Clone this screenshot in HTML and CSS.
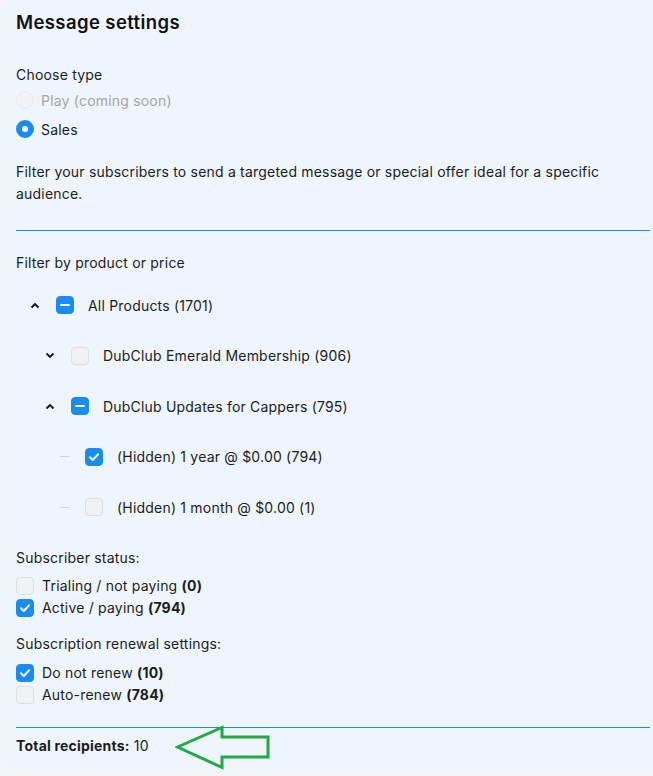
FILE: index.html
```html
<!DOCTYPE html>
<html lang="en">
<head>
<meta charset="utf-8">
<title>Message settings</title>
<link rel="stylesheet" href="styles.css">
</head>
<body>
<div class="card">
  <h2 class="title">Message settings</h2>

  <div class="label choose">Choose type</div>
  <div class="radio-row disabled"><span class="radio"></span><span>Play (coming soon)</span></div>
  <div class="radio-row"><span class="radio on"></span><span>Sales</span></div>

  <p class="desc">Filter your subscribers to send a targeted message or special offer ideal for a specific audience.</p>

  <div class="divider first"></div>

  <div class="label filter">Filter by product or price</div>

  <div class="tree">
    <div class="node lvl0">
      <span class="toggle"><svg width="10" height="7" viewBox="0 0 10 7"><polyline points="1.5,5.5 5,2 8.5,5.5" fill="none" stroke="#111" stroke-width="1.8"/></svg></span>
      <span class="cb mixed"></span>
      <span class="node-text">All Products (1701)</span>
    </div>
    <div class="node lvl1">
      <span class="toggle"><svg width="10" height="7" viewBox="0 0 10 7"><polyline points="1.5,1.5 5,5 8.5,1.5" fill="none" stroke="#111" stroke-width="1.8"/></svg></span>
      <span class="cb"></span>
      <span class="node-text">DubClub Emerald Membership (906)</span>
    </div>
    <div class="node lvl1">
      <span class="toggle"><svg width="10" height="7" viewBox="0 0 10 7"><polyline points="1.5,5.5 5,2 8.5,5.5" fill="none" stroke="#111" stroke-width="1.8"/></svg></span>
      <span class="cb mixed"></span>
      <span class="node-text">DubClub Updates for Cappers (795)</span>
    </div>
    <div class="node lvl2">
      <span class="toggle"><span class="dash"></span></span>
      <span class="cb checked"><svg width="18" height="18" viewBox="0 0 18 18"><polyline points="5,9.3 7.8,12 13,6.3" fill="none" stroke="#fff" stroke-width="2" stroke-linecap="round" stroke-linejoin="round"/></svg></span>
      <span class="node-text">(Hidden) 1 year @ $0.00 (794)</span>
    </div>
    <div class="node lvl2">
      <span class="toggle"><span class="dash"></span></span>
      <span class="cb"></span>
      <span class="node-text">(Hidden) 1 month @ $0.00 (1)</span>
    </div>
  </div>

  <div class="label status">Subscriber status:</div>
  <div class="check-row first-check"><span class="cb"></span><span>Trialing / not paying <b>(0)</b></span></div>
  <div class="check-row"><span class="cb checked"><svg width="18" height="18" viewBox="0 0 18 18"><polyline points="5,9.3 7.8,12 13,6.3" fill="none" stroke="#fff" stroke-width="2" stroke-linecap="round" stroke-linejoin="round"/></svg></span><span>Active / paying <b>(794)</b></span></div>

  <div class="label renewal">Subscription renewal settings:</div>
  <div class="check-row first-check"><span class="cb checked"><svg width="18" height="18" viewBox="0 0 18 18"><polyline points="5,9.3 7.8,12 13,6.3" fill="none" stroke="#fff" stroke-width="2" stroke-linecap="round" stroke-linejoin="round"/></svg></span><span>Do not renew <b>(10)</b></span></div>
  <div class="check-row"><span class="cb"></span><span>Auto-renew <b>(784)</b></span></div>

  <div class="divider last"></div>

  <div class="total"><b>Total recipients:</b> 10
    <svg class="arrow" width="96" height="46" viewBox="0 0 96 46"><polygon points="2.5,22 47,2.5 47,12 93,12 93,32 47,32 47,42.5" fill="none" stroke="#22a845" stroke-width="3" stroke-linejoin="miter"/></svg>
  </div>
</div>
</body>
</html>
```
FILE: styles.css
```css
html, body {
  margin: 0;
  padding: 0;
}
body {
  background: #f4f5f6;
  font-family: Inter, "Noto Sans", sans-serif;
  color: #1c1c1c;
  font-size: 14px;
  letter-spacing: 0.2px;
}
.card {
  margin: 0 0 6px 2px;
  background: #eef5fc;
  border-radius: 8px 0 0 8px;
  padding: 10px 3px 14px 14px;
}
.title {
  margin: 0;
  font-size: 18.5px;
  line-height: 24px;
  font-weight: 600;
  color: #111;
  letter-spacing: 0.4px;
}
.label {
  line-height: 20px;
}
.choose { margin-top: 31px; margin-bottom: 4px; }
.radio-row {
  display: flex;
  align-items: center;
  gap: 7px;
  height: 22px;
  margin-bottom: 7px;
}
.radio-row.disabled { color: #a5a5a5; }
.radio {
  width: 18px;
  height: 18px;
  box-sizing: border-box;
  border-radius: 50%;
  border: 1px solid #e6e9ec;
  background: #f0f2f4;
  flex: none;
}
.radio.on {
  border: 6px solid #1a8cf0;
  background: #fff;
}
.desc {
  margin: 21px 0 0;
  line-height: 22px;
}
.divider {
  height: 1px;
  background: #1a8cf0;
}
.divider.first { margin-top: 25px; }
.filter { margin-top: 22px; margin-bottom: 7px; }
.node {
  display: flex;
  align-items: center;
  height: 50.5px;
}
.lvl0 { padding-left: 10px; }
.lvl1 { padding-left: 25px; }
.lvl2 { padding-left: 39px; }
.toggle {
  width: 18px;
  height: 18px;
  display: flex;
  align-items: center;
  justify-content: center;
  margin-right: 12px;
  flex: none;
}
.dash {
  width: 9px;
  height: 1px;
  background: #d0d4d8;
}
.cb {
  width: 18px;
  height: 18px;
  box-sizing: border-box;
  border-radius: 4px;
  border: 1px solid #dcdfe3;
  background: #f1f2f3;
  flex: none;
  display: flex;
  position: relative;
}
.cb.checked, .cb.mixed {
  background: #1a8cf0;
  border-color: #1a8cf0;
}
.cb.mixed::after {
  content: "";
  position: absolute;
  left: 3px;
  right: 3px;
  top: 7px;
  height: 2px;
  background: #fff;
  border-radius: 1px;
}
.cb svg { margin: -1px; }
.node-text { margin-left: 14px; }
.status { margin-top: 15px; margin-bottom: 7px; }
.renewal { margin-top: 15px; margin-bottom: 8px; }
.check-row {
  display: flex;
  align-items: center;
  gap: 8px;
  height: 22px;
}
.check-row b { font-weight: 700; }
.divider.last { margin-top: 21px; }
.total {
  margin-top: 8px;
  line-height: 20px;
  position: relative;
}
.total b { font-weight: 700; }
.arrow {
  position: absolute;
  left: 159px;
  top: -11px;
}
```
